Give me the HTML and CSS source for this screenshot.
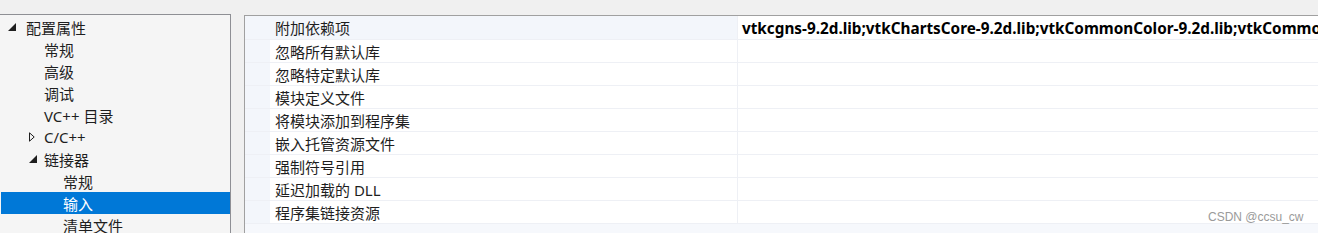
FILE: index.html
```html
<!DOCTYPE html>
<html lang="zh-CN">
<head>
    <meta charset="UTF-8">
    <title>链接器 - 输入</title>
    <link rel="stylesheet" href="styles.css">
</head>
<body>
    <div class="page">
        <!-- left: property tree -->
        <div class="tree">
            <div class="node lvl0"><span class="twisty"><svg width="8" height="8" viewBox="0 0 8 8"><polygon points="8,0 8,8 0,8" fill="#1e1e1e"/></svg></span>配置属性</div>
            <div class="node lvl1"><span class="twisty"></span>常规</div>
            <div class="node lvl1"><span class="twisty"></span>高级</div>
            <div class="node lvl1"><span class="twisty"></span>调试</div>
            <div class="node lvl1"><span class="twisty"></span>VC++ 目录</div>
            <div class="node lvl1"><span class="twisty"><svg width="6" height="10" viewBox="0 0 6 10"><polygon points="0.5,0.8 5.2,5 0.5,9.2" fill="none" stroke="#1e1e1e" stroke-width="1"/></svg></span>C/C++</div>
            <div class="node lvl1"><span class="twisty"><svg width="8" height="8" viewBox="0 0 8 8"><polygon points="8,0 8,8 0,8" fill="#1e1e1e"/></svg></span>链接器</div>
            <div class="node lvl2"><span class="twisty"></span>常规</div>
            <div class="node lvl2 selected"><span class="twisty"></span>输入</div>
            <div class="node lvl2"><span class="twisty"></span>清单文件</div>
        </div>

        <!-- right: property grid -->
        <div class="grid">
            <div class="row current">
                <div class="gutter"></div>
                <div class="name">附加依赖项</div>
                <div class="value">vtkcgns-9.2d.lib;vtkChartsCore-9.2d.lib;vtkCommonColor-9.2d.lib;vtkCommo</div>
            </div>
            <div class="row"><div class="gutter"></div><div class="name">忽略所有默认库</div><div class="value"></div></div>
            <div class="row"><div class="gutter"></div><div class="name">忽略特定默认库</div><div class="value"></div></div>
            <div class="row"><div class="gutter"></div><div class="name">模块定义文件</div><div class="value"></div></div>
            <div class="row"><div class="gutter"></div><div class="name">将模块添加到程序集</div><div class="value"></div></div>
            <div class="row"><div class="gutter"></div><div class="name">嵌入托管资源文件</div><div class="value"></div></div>
            <div class="row"><div class="gutter"></div><div class="name">强制符号引用</div><div class="value"></div></div>
            <div class="row"><div class="gutter"></div><div class="name">延迟加载的 DLL</div><div class="value"></div></div>
            <div class="row"><div class="gutter"></div><div class="name">程序集链接资源</div><div class="value"></div></div>
        </div>

        <span class="watermark">CSDN @ccsu_cw</span>
    </div>
</body>
</html>
```

FILE: styles.css
```css
/* property pages */
body {
    margin: 0;
    background-color: #f0f0f0;
    font-family: "Noto Sans", "Noto Sans CJK SC", sans-serif;
    font-size: 15px;
    color: #1e1e1e;
    overflow: hidden;
}

.page {
    position: relative;
    display: flex;
    align-items: flex-start;
    height: 233px;
    padding-top: 14px;
    box-sizing: border-box;
    overflow: hidden;
}

/* tree */
.tree {
    width: 231px;
    height: 219px;
    flex-shrink: 0;
    padding-top: 1px;
    box-sizing: border-box;
    overflow: hidden;
    background-color: #f5f5f5;
    border-top: 1px solid #8e8f94;
    border-right: 1px solid #8e8f94;
}

.node {
    display: flex;
    align-items: center;
    height: 22px;
    margin-left: 1px;
    white-space: nowrap;
}

.lvl0 { padding-left: 7px; }
.lvl1 { padding-left: 25px; }
.lvl2 { padding-left: 44px; }

.twisty {
    display: flex;
    align-items: center;
    width: 18px;
    height: 22px;
}

.lvl1 .twisty svg { margin-left: 3px; }

.node.selected {
    background-color: #0078d7;
    color: #fff;
}

/* grid */
.grid {
    flex: 1;
    margin-left: 13px;
    margin-top: 1px;
    height: 218px;
    overflow: hidden;
    background-color: #f6f8fc;
    border-top: 1px solid #a0a0a0;
    border-left: 1px solid #a0a0a0;
}

.row {
    display: flex;
    height: 23px;
    box-sizing: border-box;
    border-bottom: 1px solid #eef0f5;
}

.row.current {
    height: 24px;
}

.gutter {
    width: 25px;
    flex-shrink: 0;
    background-color: #f3f6fb;
}

.name {
    width: 462px;
    flex-shrink: 0;
    padding-left: 5px;
    display: flex;
    align-items: center;
    background-color: #fff;
    border-right: 1px solid #eef0f5;
    white-space: nowrap;
}

.row.current .name {
    background-color: #f3f6fb;
}

.value {
    flex: 1;
    padding-left: 4px;
    display: flex;
    align-items: center;
    background-color: #fff;
    white-space: nowrap;
    overflow: hidden;
    font-weight: bold;
    font-size: 15.3px;
    color: #000;
}

.watermark {
    position: absolute;
    left: 1208px;
    top: 210px;
    font-family: "Liberation Sans", sans-serif;
    font-size: 12px;
    color: #9a9a9a;
}
```
